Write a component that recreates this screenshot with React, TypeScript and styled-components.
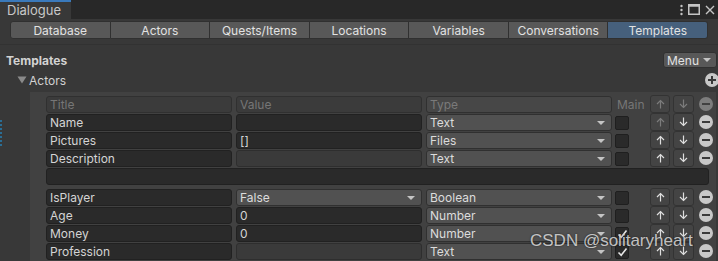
import React from 'react';
import styled, { createGlobalStyle, css } from 'styled-components';

const GlobalStyle = createGlobalStyle`
  html, body {
    margin: 0;
    padding: 0;
    background: #383838;
  }
  body {
    font-family: Inter, "Noto Sans", sans-serif;
    font-size: 12px;
    color: #d2d2d2;
  }
`;

const Window = styled.div`
  position: relative;
  width: 718px;
  height: 261px;
  overflow: hidden;
  background: #383838;
  display: flex;
  flex-direction: column;
`;

const TitleBar = styled.div`
  height: 19px;
  background: #282828;
  display: flex;
  align-items: stretch;
  flex-shrink: 0;
`;

const Tab = styled.div`
  width: 71px;
  box-sizing: border-box;
  background: #383838;
  border-top: 2px solid #3a79bb;
  padding-left: 7px;
  font-size: 13px;
  line-height: 16px;
  color: #c8c8c8;
`;

const WindowIcons = styled.div`
  margin-left: auto;
  display: flex;
  align-items: center;
  gap: 5px;
  padding-right: 3px;
  color: #c4c4c4;
`;

const Toolbar = styled.div`
  display: flex;
  margin: 2px 10px 0;
  height: 18px;
  flex-shrink: 0;
`;

const ToolButton = styled.div<{ $active?: boolean }>`
  flex: 1;
  box-sizing: border-box;
  background: ${(p) => (p.$active ? '#46607c' : '#585858')};
  border: 1px solid #303030;
  border-left: none;
  color: #e2e2e2;
  font-size: 12px;
  line-height: 17px;
  text-align: center;
  &:first-child {
    border-left: 1px solid #303030;
    border-radius: 3px 0 0 3px;
  }
  &:last-child {
    border-radius: 0 3px 3px 0;
  }
`;

const Separator = styled.div`
  height: 1px;
  background: #323232;
  margin-top: 5px;
  flex-shrink: 0;
`;

const SectionHeader = styled.div`
  display: flex;
  align-items: center;
  height: 16px;
  margin-top: 7px;
  padding-left: 6px;
  padding-right: 1px;
  flex-shrink: 0;
`;

const SectionTitle = styled.div`
  font-weight: 700;
  font-size: 12px;
  color: #d2d2d2;
`;

const MenuButton = styled.div`
  margin-left: auto;
  width: 54px;
  height: 16px;
  box-sizing: border-box;
  background: #585858;
  border: 1px solid #303030;
  border-radius: 3px;
  display: flex;
  align-items: center;
  padding: 0 5px 0 3px;
  color: #e2e2e2;
  font-size: 12px;
`;

const Foldout = styled.div`
  display: flex;
  align-items: center;
  height: 16px;
  margin-top: 4px;
  padding-left: 17px;
  flex-shrink: 0;
`;

const FoldoutLabel = styled.span`
  margin-left: 2px;
  color: #d2d2d2;
`;

const AddButton = styled.div`
  margin-left: auto;
  width: 14px;
  height: 14px;
  border-radius: 50%;
  background: #c8c8c8;
  display: flex;
  align-items: center;
  justify-content: center;
  transform: translateX(1px);
`;

const Panel = styled.div`
  margin: 4px 2px 0 30px;
  flex: 1;
  background: #414141;
  padding: 4px 0 0 16px;
  display: flex;
  flex-direction: column;
`;

const Row = styled.div`
  display: grid;
  grid-template-columns: 186px 186px 186px 30px 20px 20px 15px;
  column-gap: 4px;
  height: 18px;
  align-items: start;
  & > :nth-child(4) {
    margin-left: -1px;
  }
  & > :nth-child(6) {
    margin-left: -1px;
  }
`;

type FieldKind = 'text' | 'header' | 'disabled';

const Field = styled.div<{ $kind?: FieldKind }>`
  height: 17px;
  box-sizing: border-box;
  border-radius: 3px;
  padding-left: 3px;
  font-size: 12px;
  line-height: 15px;
  white-space: nowrap;
  overflow: hidden;
  ${(p) =>
    p.$kind === 'header'
      ? css`
          background: #3b3b3b;
          border: 1px solid #303030;
          color: #767676;
        `
      : p.$kind === 'disabled'
        ? css`
            background: #3a3a3a;
            border: 1px solid #2e2e2e;
            color: #d2d2d2;
          `
        : css`
            background: #2a2a2a;
            border: 1px solid #212121;
            color: #d4d4d4;
          `}
`;

const Popup = styled.div<{ $dim?: boolean }>`
  height: 17px;
  box-sizing: border-box;
  border-radius: 3px;
  padding: 0 6px 0 3px;
  display: flex;
  align-items: center;
  background: ${(p) => (p.$dim ? '#474747' : '#515151')};
  border: 1px solid #303030;
  color: ${(p) => (p.$dim ? '#7a7a7a' : '#dcdcdc')};
  font-size: 12px;
`;

const PopupArrow = styled.span`
  margin-left: auto;
  width: 0;
  height: 0;
  border-left: 4px solid transparent;
  border-right: 4px solid transparent;
  border-top: 4px solid #c4c4c4;
`;

const MainLabel = styled.div`
  color: #767676;
  font-size: 12px;
  line-height: 17px;
  padding-left: 2px;
`;

const CheckCell = styled.div`
  padding-top: 2px;
`;

const Checkbox = styled.div`
  width: 14px;
  height: 14px;
  box-sizing: border-box;
  background: #2a2a2a;
  border: 1px solid #1f1f1f;
  border-radius: 2px;
  display: flex;
  align-items: center;
  justify-content: center;
`;

const ArrowButton = styled.div<{ $disabled?: boolean }>`
  height: 18px;
  box-sizing: border-box;
  border: 1px solid #333333;
  border-radius: 3px;
  background: #444444;
  display: flex;
  align-items: center;
  justify-content: center;
  color: ${(p) => (p.$disabled ? '#7c7c7c' : '#dedede')};
  margin-top: -1px;
`;

const RemoveButton = styled.div<{ $dim?: boolean }>`
  width: 14px;
  height: 14px;
  margin-top: 1px;
  margin-left: 1px;
  border-radius: 50%;
  background: ${(p) => (p.$dim ? '#7d7d7d' : '#c8c8c8')};
  display: flex;
  align-items: center;
  justify-content: center;
  &::after {
    content: '';
    width: 8px;
    height: 2px;
    background: ${(p) => (p.$dim ? '#414141' : '#3a3a3a')};
  }
`;

const WideField = styled.div`
  height: 17px;
  box-sizing: border-box;
  width: 663px;
  margin: 0 0 4px 0;
  background: #2a2a2a;
  border: 1px solid #212121;
  border-radius: 3px;
`;

const Watermark = styled.div`
  position: absolute;
  left: 530px;
  top: 231px;
  font-family: "Liberation Sans", Arial, sans-serif;
  font-size: 17px;
  color: rgba(235, 235, 235, 0.8);
  text-shadow: 0 0 2px rgba(0, 0, 0, 0.6);
  white-space: nowrap;
`;

const EdgeMark = styled.div`
  position: absolute;
  left: 0;
  top: 120px;
  width: 2px;
  height: 28px;
  background: repeating-linear-gradient(#2a6e96 0 2px, transparent 2px 4px);
`;

const Arrow = ({ up }: { up?: boolean }) => (
  <svg width="9" height="10" viewBox="0 0 9 10">
    <g
      fill="none"
      stroke="currentColor"
      strokeWidth="1.2"
      transform={up ? undefined : 'rotate(180 4.5 5)'}
    >
      <path d="M4.5 1.5 V9.5" />
      <path d="M1 5 L4.5 1.5 L8 5" />
    </g>
  </svg>
);

const Check = () => (
  <svg width="11" height="10" viewBox="0 0 11 10">
    <path d="M1.5 5.5 L4.2 8.2 L9.5 1.5" fill="none" stroke="#e6e6e6" strokeWidth="1.6" />
  </svg>
);

type RowData = {
  title: string;
  value?: string;
  valueKind?: 'text' | 'disabled' | 'popup';
  type: string;
  checked?: boolean;
  upDisabled?: boolean;
};

const firstGroup: RowData[] = [
  { title: 'Name', value: '', type: 'Text', upDisabled: true },
  { title: 'Pictures', value: '[]', type: 'Files' },
  { title: 'Description', value: '', valueKind: 'disabled', type: 'Text' },
];

const secondGroup: RowData[] = [
  { title: 'IsPlayer', value: 'False', valueKind: 'popup', type: 'Boolean' },
  { title: 'Age', value: '0', type: 'Number' },
  { title: 'Money', value: '0', type: 'Number', checked: true },
  { title: 'Profession', value: '', valueKind: 'disabled', type: 'Text', checked: true },
];

const FieldRow = ({ row }: { row: RowData }) => (
  <Row>
    <Field>{row.title}</Field>
    {row.valueKind === 'popup' ? (
      <Popup>
        {row.value}
        <PopupArrow />
      </Popup>
    ) : (
      <Field $kind={row.valueKind === 'disabled' ? 'disabled' : 'text'}>{row.value}</Field>
    )}
    <Popup>
      {row.type}
      <PopupArrow />
    </Popup>
    <CheckCell>
      <Checkbox>{row.checked && <Check />}</Checkbox>
    </CheckCell>
    <ArrowButton $disabled={row.upDisabled}>
      <Arrow up />
    </ArrowButton>
    <ArrowButton>
      <Arrow />
    </ArrowButton>
    <RemoveButton />
  </Row>
);

const tabs = ['Database', 'Actors', 'Quests/Items', 'Locations', 'Variables', 'Conversations', 'Templates'];

export default function App() {
  return (
    <>
      <GlobalStyle />
      <Window>
        <TitleBar>
          <Tab>Dialogue</Tab>
          <WindowIcons>
            <svg width="3" height="12" viewBox="0 0 3 12">
              <circle cx="1.5" cy="2" r="1.2" fill="#c4c4c4" />
              <circle cx="1.5" cy="6" r="1.2" fill="#c4c4c4" />
              <circle cx="1.5" cy="10" r="1.2" fill="#c4c4c4" />
            </svg>
            <svg width="12" height="11" viewBox="0 0 12 11">
              <rect x="0.75" y="0.75" width="10.5" height="9.5" fill="none" stroke="#c4c4c4" strokeWidth="1.5" />
              <rect x="0.75" y="0.75" width="10.5" height="2" fill="#c4c4c4" />
            </svg>
            <svg width="10" height="10" viewBox="0 0 10 10">
              <path d="M1 1 L9 9 M9 1 L1 9" stroke="#c4c4c4" strokeWidth="1.4" />
            </svg>
          </WindowIcons>
        </TitleBar>

        <Toolbar>
          {tabs.map((t) => (
            <ToolButton key={t} $active={t === 'Templates'}>
              {t}
            </ToolButton>
          ))}
        </Toolbar>

        <Separator />

        <SectionHeader>
          <SectionTitle>Templates</SectionTitle>
          <MenuButton>
            Menu
            <PopupArrow />
          </MenuButton>
        </SectionHeader>

        <Foldout>
          <svg width="10" height="8" viewBox="0 0 10 8">
            <path d="M0.5 0.5 H9.5 L5 7.5 Z" fill="#8a8a8a" />
          </svg>
          <FoldoutLabel>Actors</FoldoutLabel>
          <AddButton>
            <svg width="10" height="10" viewBox="0 0 10 10">
              <path d="M5 1 V9 M1 5 H9" stroke="#383838" strokeWidth="2" />
            </svg>
          </AddButton>
        </Foldout>

        <Panel>
          <Row>
            <Field $kind="header">Title</Field>
            <Field $kind="header">Value</Field>
            <Popup $dim>Type</Popup>
            <MainLabel>Main</MainLabel>
            <ArrowButton $disabled>
              <Arrow up />
            </ArrowButton>
            <ArrowButton $disabled>
              <Arrow />
            </ArrowButton>
            <RemoveButton $dim />
          </Row>
          {firstGroup.map((r) => (
            <FieldRow key={r.title} row={r} />
          ))}
          <WideField />
          {secondGroup.map((r) => (
            <FieldRow key={r.title} row={r} />
          ))}
        </Panel>

        <EdgeMark />
        <Watermark>CSDN @solitaryheart</Watermark>
      </Window>
    </>
  );
}
